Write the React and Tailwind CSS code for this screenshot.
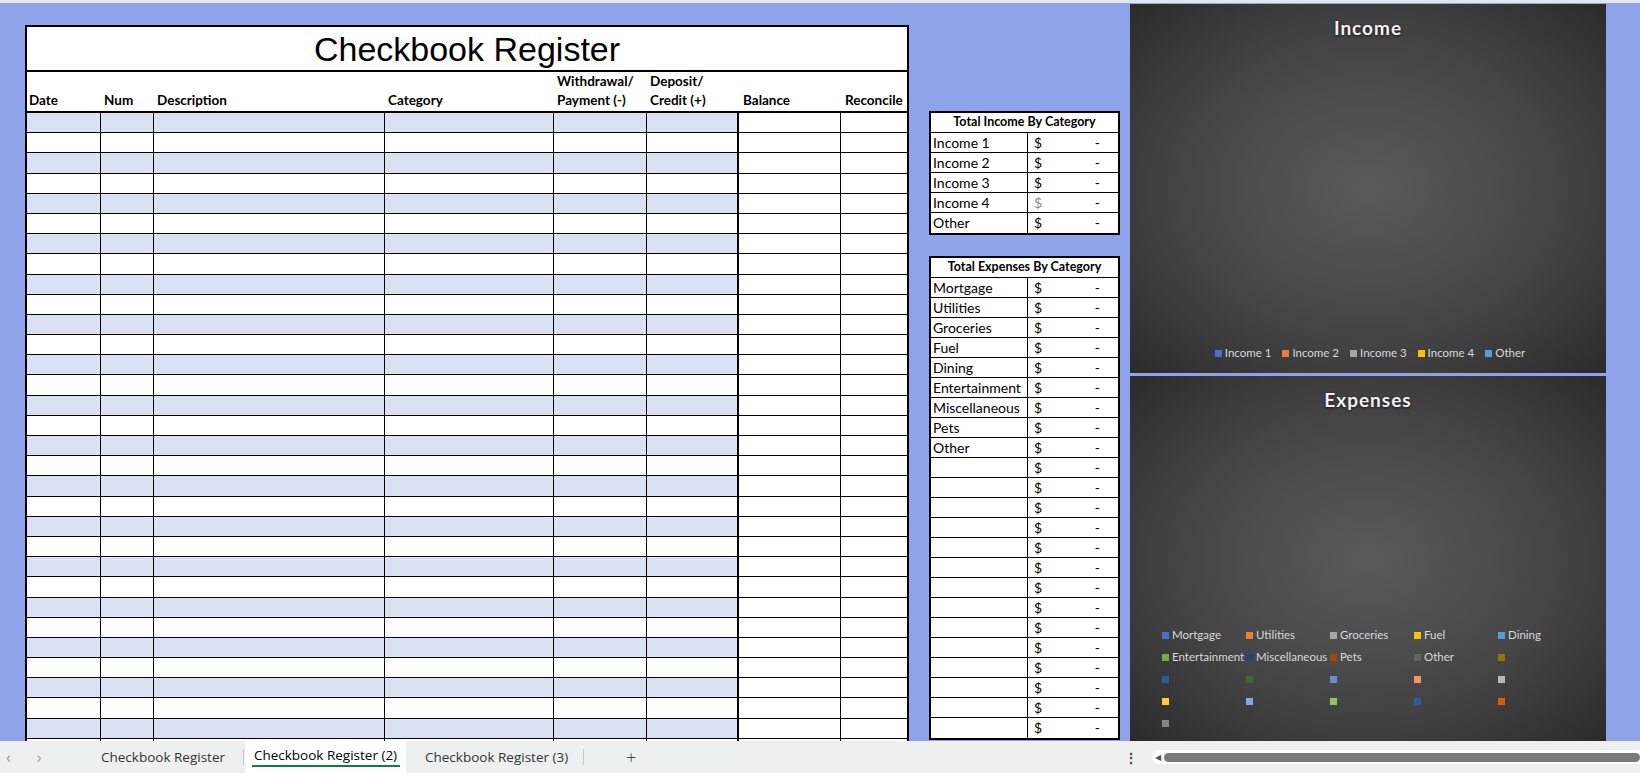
import React from 'react';

const colW = ['w-[74px]', 'w-[53px]', 'w-[231px]', 'w-[169px]', 'w-[93px]', 'w-[92px]', 'w-[102px]', 'w-[66px]'];

const incomeRows = ['Income 1', 'Income 2', 'Income 3', 'Income 4', 'Other'];
const expenseRows = [
  'Mortgage', 'Utilities', 'Groceries', 'Fuel', 'Dining', 'Entertainment', 'Miscellaneous', 'Pets', 'Other',
  '', '', '', '', '', '', '', '', '', '', '', '', '', '',
];

const expenseLegend = [
  ['#4472c4', 'Mortgage'], ['#ed7d31', 'Utilities'], ['#a5a5a5', 'Groceries'], ['#ffc000', 'Fuel'], ['#5b9bd5', 'Dining'],
  ['#70ad47', 'Entertainment'], ['#264478', 'Miscellaneous'], ['#9e480e', 'Pets'], ['#636363', 'Other'], ['#997300', ''],
  ['#255e91', ''], ['#43682b', ''], ['#698ed0', ''], ['#f1975a', ''], ['#b7b7b7', ''],
  ['#ffcd33', ''], ['#7cafdd', ''], ['#8cc168', ''], ['#335aa1', ''], ['#d26012', ''],
  ['#848484', ''],
];

const incomeLegend = [
  ['#4472c4', 'Income 1'], ['#ed7d31', 'Income 2'], ['#a5a5a5', 'Income 3'], ['#ffc000', 'Income 4'], ['#5b9bd5', 'Other'],
];

const Register = () => {
  const rows = Array.from({ length: 32 }, (_, i) => i);
  return (
    <div className="ml-[25px] mt-[22px] w-[884px] border-2 border-black bg-white">
      <div className="h-[45px] flex items-center justify-center border-b-2 border-black font-['Liberation_Sans',Arial,sans-serif] text-[34px] leading-[40px] text-black">
        Checkbook Register
      </div>
      <div className="h-[41px] flex items-end border-b-2 border-black font-bold text-[13.5px] leading-[19px] text-black">
        <div className={`${colW[0]} px-[2px] pb-[1px]`}>Date</div>
        <div className={`${colW[1]} px-[3px] pb-[1px]`}>Num</div>
        <div className={`${colW[2]} px-[3px] pb-[1px]`}>Description</div>
        <div className={`${colW[3]} px-[3px] pb-[1px]`}>Category</div>
        <div className={`${colW[4]} px-[3px] pb-[1px]`}>Withdrawal/<br />Payment (-)</div>
        <div className={`${colW[5]} px-[3px] pb-[1px]`}>Deposit/<br />Credit (+)</div>
        <div className={`${colW[6]} px-[4px] pb-[1px]`}>Balance</div>
        <div className={`${colW[7]} px-[4px] pb-[1px]`}>Reconcile</div>
      </div>
      {rows.map((r) => {
        const shade = r % 2 === 0 ? 'bg-[#d9e1f2]' : 'bg-white';
        return (
          <div key={r} className="h-[20.2px] flex border-b border-black">
            <div className={`${colW[0]} ${shade} border-r border-black`} />
            <div className={`${colW[1]} ${shade} border-r border-black`} />
            <div className={`${colW[2]} ${shade} border-r border-black`} />
            <div className={`${colW[3]} ${shade} border-r border-black`} />
            <div className={`${colW[4]} ${shade} border-r border-black`} />
            <div className={`${colW[5]} ${shade} border-r-2 border-black`} />
            <div className={`${colW[6]} bg-white border-r border-black`} />
            <div className={`${colW[7]} bg-white`} />
          </div>
        );
      })}
    </div>
  );
};

const Totals = ({ title, rows, grayIndex }) => (
  <div className="w-[191px] border-2 border-black bg-white text-black">
    <div className="h-[20px] flex items-center justify-center border-b border-black font-bold text-[12.5px]">
      {title}
    </div>
    {rows.map((label, i) => (
      <div key={i} className={`h-[20px] flex text-[14px] leading-[19px] ${i < rows.length - 1 ? 'border-b border-black' : ''}`}>
        <div className="w-[97px] border-r border-black pl-[2px]">{label}</div>
        <div className="flex-1 flex justify-between pl-[6px] pr-[18px]">
          <span className={i === grayIndex ? 'text-[#8a8a8a]' : ''}>$</span>
          <span>-</span>
        </div>
      </div>
    ))}
  </div>
);

const Swatch = ({ color }) => (
  <span className="inline-block w-[7px] h-[7px] shrink-0" style={{ backgroundColor: color }} />
);

const chartBg = "bg-[radial-gradient(ellipse_at_center,#5a5a5a_0%,#454545_55%,#2b2b2b_100%)]";

const Charts = () => (
  <div className="ml-[10px] mt-[1px] w-[476px] flex flex-col gap-[3px]">
    <div className={`h-[369px] ${chartBg} flex flex-col items-center`}>
      <div className="pt-[12px] text-[19px] leading-[24px] font-bold tracking-[1px] text-[#f2f2f2] [text-shadow:0_1px_3px_rgba(0,0,0,0.7)]">
        Income
      </div>
      <div className="flex-1" />
      <div className="pb-[13px] pl-[4px] flex gap-[11px] text-[11.5px] leading-[14px] text-[#d9d9d9]">
        {incomeLegend.map(([c, l]) => (
          <div key={l} className="flex items-center gap-[3px]">
            <Swatch color={c} />
            <span>{l}</span>
          </div>
        ))}
      </div>
    </div>
    <div className={`h-[365px] ${chartBg} flex flex-col`}>
      <div className="pt-[12px] text-center text-[19px] leading-[24px] font-bold tracking-[1px] text-[#f2f2f2] [text-shadow:0_1px_3px_rgba(0,0,0,0.7)]">
        Expenses
      </div>
      <div className="mt-[212px] ml-[32px] grid grid-cols-[84px_84px_84px_84px_84px] auto-rows-[22px] text-[11.5px] text-[#d9d9d9]">
        {expenseLegend.map(([c, l], i) => (
          <div key={i} className="flex items-center gap-[3px] whitespace-nowrap">
            <Swatch color={c} />
            <span>{l}</span>
          </div>
        ))}
      </div>
    </div>
  </div>
);

const TabBar = () => (
  <div className="h-[32px] flex items-stretch bg-[#eef0ef] font-['Open_Sans',sans-serif] text-[13.5px] text-[#333]">
    <div className="w-[80px] flex items-center text-[16px] text-[#9a9a9a]">
      <span className="ml-[6px]">‹</span>
      <span className="ml-[26px]">›</span>
    </div>
    <div className="w-[163px] flex items-center pl-[21px]">Checkbook Register</div>
    <div className="w-px h-[16px] self-center bg-[#c8c8c8]" />
    <div className="w-px" />
    <div className="w-[161px] bg-white flex flex-col items-center justify-center">
      <span className="text-black leading-[16px]">Checkbook Register (2)</span>
      <span className="mt-[2px] w-[148px] h-[2px] bg-[#107c41]" />
    </div>
    <div className="w-[177px] flex items-center pl-[19px]">Checkbook Register (3)</div>
    <div className="w-px h-[16px] self-center bg-[#c8c8c8]" />
    <div className="ml-[42px] flex items-center text-[18px] font-light text-[#444]">+</div>
    <div className="ml-[488px] flex items-center text-[14px] font-bold text-[#444]">⋮</div>
    <div className="ml-[14px] flex-1 flex items-center">
      <div className="w-full h-[14px] bg-white rounded-l-full flex items-center pl-[3px] gap-[3px]">
        <span className="text-[8px] text-[#555]">◀</span>
        <div className="flex-1 h-[9px] rounded-full bg-[#7a7a7a]" />
      </div>
    </div>
  </div>
);

export default function App() {
  return (
    <div className="w-[1640px] h-[773px] flex flex-col overflow-hidden font-['Lato',sans-serif]">
      <div className="h-[3px] shrink-0 bg-[#e3e6ec]" />
      <div className="h-[738px] shrink-0 bg-[#8ea3e9] flex items-start overflow-hidden">
        <Register />
        <div className="ml-[20px] mt-[108px] flex flex-col gap-[21px]">
          <Totals title="Total Income By Category" rows={incomeRows} grayIndex={3} />
          <Totals title="Total Expenses By Category" rows={expenseRows} grayIndex={-1} />
        </div>
        <Charts />
      </div>
      <TabBar />
    </div>
  );
}
